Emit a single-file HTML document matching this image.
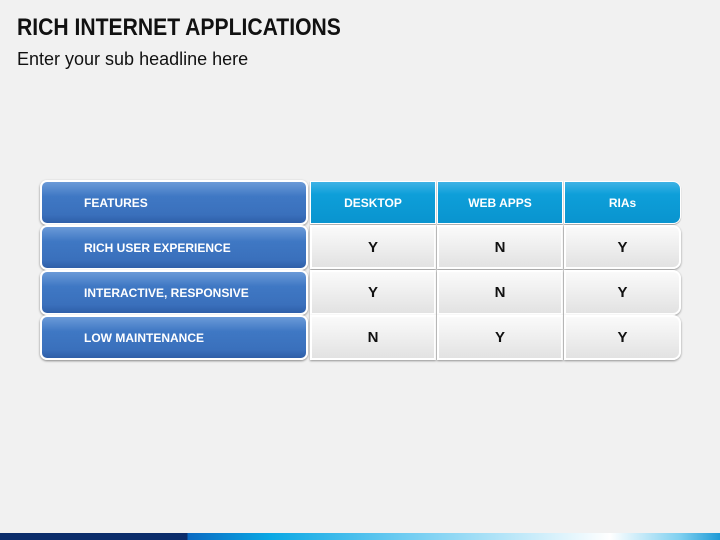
<!DOCTYPE html>
<html><head><meta charset="utf-8"><style>
*{margin:0;padding:0;box-sizing:border-box}
body{width:720px;height:540px;background:#f1f1f1;position:relative;overflow:hidden;font-family:"Liberation Sans",sans-serif}
.t{position:absolute;left:17px;top:14px;font-size:24px;font-weight:bold;color:#111;transform:scaleX(0.88);transform-origin:left top;white-space:nowrap}
.s{position:absolute;left:17px;top:49px;font-size:18px;color:#111;transform:scaleX(1.0);transform-origin:left top;white-space:nowrap}
.c{position:absolute;display:flex;align-items:center;font-weight:bold}
.f{background:linear-gradient(#6a9ad8 0%,#3f78c4 35%,#3a70bc 80%,#2e5ea8 100%);color:#fff;font-size:12px;padding-left:42px;border:2px solid #fff;border-radius:7px;box-shadow:0 1px 2px rgba(0,0,0,.45)}
.h{background:linear-gradient(#3fb3e6 0%,#0e9fd9 30%,#0994cf 100%);color:#fff;font-size:12px;justify-content:center;border:1px solid #fff;box-shadow:0 1px 1px rgba(0,0,0,.3)}
.v{background:linear-gradient(#fafafa,#ececec 60%,#e2e2e2);color:#111;font-size:15px;justify-content:center;border:2px solid #fff;box-shadow:0 1px 2px rgba(0,0,0,.4)}
.bar{position:absolute;left:0;top:533px;height:7px;width:720px;background:linear-gradient(90deg,#0c2d6b 0,#0c2d6b 187px,#0a6ac2 188px,#0aa8e4 270px,#6ccbf1 400px,#ffffff 610px,#7fd0f0 680px,#1f9ad6 720px)}
</style></head><body>
<div class="t">RICH INTERNET APPLICATIONS</div>
<div class="s">Enter your sub headline here</div>

<div class="c f" style="left:40px;top:180px;width:268px;height:45px">FEATURES</div>
<div class="c h" style="left:310px;top:181px;width:126px;height:43px">DESKTOP</div>
<div class="c h" style="left:437px;top:181px;width:126px;height:43px">WEB APPS</div>
<div class="c h" style="left:564px;top:181px;width:117px;height:43px;border-radius:0 8px 8px 0">RIAs</div>

<div class="c f" style="left:40px;top:225px;width:268px;height:45px">RICH USER EXPERIENCE</div>
<div class="c v" style="left:310px;top:225px;width:126px;height:44px">Y</div>
<div class="c v" style="left:437px;top:225px;width:126px;height:44px">N</div>
<div class="c v" style="left:564px;top:225px;width:117px;height:44px;border-radius:0 8px 8px 0">Y</div>

<div class="c f" style="left:40px;top:270px;width:268px;height:45px">INTERACTIVE, RESPONSIVE</div>
<div class="c v" style="left:310px;top:270px;width:126px;height:45px">Y</div>
<div class="c v" style="left:437px;top:270px;width:126px;height:45px">N</div>
<div class="c v" style="left:564px;top:270px;width:117px;height:45px;border-radius:0 8px 8px 0">Y</div>

<div class="c f" style="left:40px;top:315px;width:268px;height:45px">LOW MAINTENANCE</div>
<div class="c v" style="left:310px;top:315px;width:126px;height:45px">N</div>
<div class="c v" style="left:437px;top:315px;width:126px;height:45px">Y</div>
<div class="c v" style="left:564px;top:315px;width:117px;height:45px;border-radius:0 8px 8px 0">Y</div>

<div class="bar"></div>
</body></html>
